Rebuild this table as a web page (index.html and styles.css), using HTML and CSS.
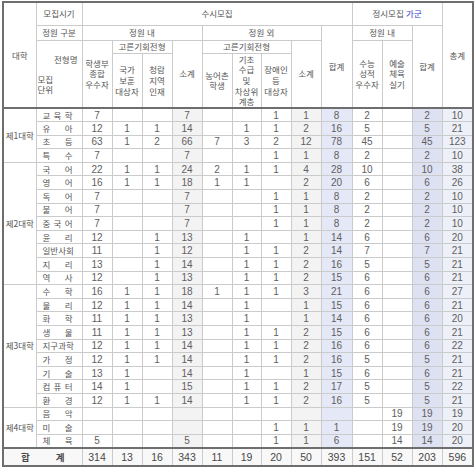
FILE: index.html
```html
<!DOCTYPE html>
<html lang="ko">
<head>
<meta charset="utf-8">
<link rel="stylesheet" href="styles.css">
</head>
<body>
<div class="frame">
<table class="t">
<colgroup>
<col class="w32"><col class="w46">
<col class="w30"><col class="w30"><col class="w30"><col class="w30">
<col class="w30"><col class="w29"><col class="w30"><col class="w30">
<col class="w31"><col class="w30"><col class="w30"><col class="w30"><col class="w30">
</colgroup>
<thead>
<tr class="h1">
<th rowspan="4">대학</th>
<th>모집시기</th>
<th colspan="9">수시모집</th>
<th colspan="3">정시모집 <span class="blue">가군</span></th>
<th rowspan="4">총계</th>
</tr>
<tr class="h2">
<th>정원 구분</th>
<th colspan="4">정원 내</th>
<th colspan="4">정원 외</th>
<th rowspan="3">합계</th>
<th colspan="2">정원 내</th>
<th rowspan="3">합계</th>
</tr>
<tr class="h3">
<th rowspan="2" class="diag"><div class="diagbox"><span class="dr">전형명</span><span class="dl">모집<br>단위</span></div></th>
<th rowspan="2">학생부<br>종합<br>우수자</th>
<th colspan="2">고른기회전형</th>
<th rowspan="2">소계</th>
<th colspan="3">고른기회전형</th>
<th rowspan="2">소계</th>
<th rowspan="2">수능<br>성적<br>우수자</th>
<th rowspan="2">예술<br>체육<br>실기</th>
</tr>
<tr class="h4">
<th>국가<br>보훈<br>대상자</th>
<th>청람<br>지역<br>인재</th>
<th>농어촌<br>학생</th>
<th>기초<br>수급<br>및<br>차상위<br>계층</th>
<th>장애인<br>등<br>대상자</th>
</tr>
</thead>
<tbody>
<tr><td rowspan="4" class="grp">제1대학</td><td class="lbl">교 육 학</td><td>7</td><td></td><td></td><td>7</td><td></td><td></td><td>1</td><td>1</td><td>8</td><td>2</td><td></td><td>2</td><td>10</td></tr>
<tr><td class="lbl">유 아</td><td>12</td><td>1</td><td>1</td><td>14</td><td></td><td>1</td><td>1</td><td>2</td><td>16</td><td>5</td><td></td><td>5</td><td>21</td></tr>
<tr><td class="lbl">초 등</td><td>63</td><td>1</td><td>2</td><td>66</td><td>7</td><td>3</td><td>2</td><td>12</td><td>78</td><td>45</td><td></td><td>45</td><td>123</td></tr>
<tr><td class="lbl">특 수</td><td>7</td><td></td><td></td><td>7</td><td></td><td></td><td>1</td><td>1</td><td>8</td><td>2</td><td></td><td>2</td><td>10</td></tr>

<tr><td rowspan="9" class="grp">제2대학</td><td class="lbl">국 어</td><td>22</td><td>1</td><td>1</td><td>24</td><td>2</td><td>1</td><td>1</td><td>4</td><td>28</td><td>10</td><td></td><td>10</td><td>38</td></tr>
<tr><td class="lbl">영 어</td><td>16</td><td>1</td><td>1</td><td>18</td><td>1</td><td>1</td><td></td><td>2</td><td>20</td><td>6</td><td></td><td>6</td><td>26</td></tr>
<tr><td class="lbl">독 어</td><td>7</td><td></td><td></td><td>7</td><td></td><td></td><td>1</td><td>1</td><td>8</td><td>2</td><td></td><td>2</td><td>10</td></tr>
<tr><td class="lbl">불 어</td><td>7</td><td></td><td></td><td>7</td><td></td><td></td><td>1</td><td>1</td><td>8</td><td>2</td><td></td><td>2</td><td>10</td></tr>
<tr><td class="lbl">중 국 어</td><td>7</td><td></td><td></td><td>7</td><td></td><td></td><td>1</td><td>1</td><td>8</td><td>2</td><td></td><td>2</td><td>10</td></tr>
<tr><td class="lbl">윤 리</td><td>12</td><td></td><td>1</td><td>13</td><td></td><td>1</td><td></td><td>1</td><td>14</td><td>6</td><td></td><td>6</td><td>20</td></tr>
<tr><td class="lbl">일반사회</td><td>11</td><td></td><td>1</td><td>12</td><td></td><td>1</td><td>1</td><td>2</td><td>14</td><td>7</td><td></td><td>7</td><td>21</td></tr>
<tr><td class="lbl">지 리</td><td>13</td><td></td><td>1</td><td>14</td><td></td><td>1</td><td>1</td><td>2</td><td>16</td><td>5</td><td></td><td>5</td><td>21</td></tr>
<tr><td class="lbl">역 사</td><td>12</td><td></td><td>1</td><td>13</td><td></td><td>1</td><td>1</td><td>2</td><td>15</td><td>6</td><td></td><td>6</td><td>21</td></tr>

<tr><td rowspan="9" class="grp">제3대학</td><td class="lbl">수 학</td><td>16</td><td>1</td><td>1</td><td>18</td><td>1</td><td>1</td><td>1</td><td>3</td><td>21</td><td>6</td><td></td><td>6</td><td>27</td></tr>
<tr><td class="lbl">물 리</td><td>12</td><td>1</td><td>1</td><td>14</td><td></td><td>1</td><td></td><td>1</td><td>15</td><td>6</td><td></td><td>6</td><td>21</td></tr>
<tr><td class="lbl">화 학</td><td>11</td><td>1</td><td>1</td><td>13</td><td></td><td>1</td><td></td><td>1</td><td>14</td><td>6</td><td></td><td>6</td><td>20</td></tr>
<tr><td class="lbl">생 물</td><td>11</td><td>1</td><td>1</td><td>13</td><td></td><td>1</td><td>1</td><td>2</td><td>15</td><td>6</td><td></td><td>6</td><td>21</td></tr>
<tr><td class="lbl">지구과학</td><td>12</td><td>1</td><td>1</td><td>14</td><td></td><td>1</td><td>1</td><td>2</td><td>16</td><td>6</td><td></td><td>6</td><td>22</td></tr>
<tr><td class="lbl">가 정</td><td>12</td><td>1</td><td>1</td><td>14</td><td></td><td>1</td><td>1</td><td>2</td><td>16</td><td>5</td><td></td><td>5</td><td>21</td></tr>
<tr><td class="lbl">기 술</td><td>13</td><td>1</td><td></td><td>14</td><td></td><td>1</td><td></td><td>1</td><td>15</td><td>6</td><td></td><td>6</td><td>21</td></tr>
<tr><td class="lbl">컴 퓨 터</td><td>14</td><td>1</td><td></td><td>15</td><td></td><td>1</td><td>1</td><td>2</td><td>17</td><td>5</td><td></td><td>5</td><td>22</td></tr>
<tr><td class="lbl">환 경</td><td>12</td><td>1</td><td>1</td><td>14</td><td></td><td>1</td><td>1</td><td>2</td><td>16</td><td>5</td><td></td><td>5</td><td>21</td></tr>

<tr><td rowspan="3" class="grp">제4대학</td><td class="lbl">음 악</td><td></td><td></td><td></td><td></td><td></td><td></td><td></td><td></td><td></td><td></td><td>19</td><td>19</td><td>19</td></tr>
<tr><td class="lbl">미 술</td><td></td><td></td><td></td><td></td><td></td><td></td><td>1</td><td>1</td><td>1</td><td></td><td>19</td><td>19</td><td>20</td></tr>
<tr><td class="lbl">체 육</td><td>5</td><td></td><td></td><td>5</td><td></td><td></td><td>1</td><td>1</td><td>6</td><td></td><td>14</td><td>14</td><td>20</td></tr>
</tbody>
<tfoot>
<tr><td colspan="2" class="totlbl">합<span class="gap"></span>계</td><td>314</td><td>13</td><td>16</td><td>343</td><td>11</td><td>19</td><td>20</td><td>50</td><td>393</td><td>151</td><td>52</td><td>203</td><td>596</td></tr>
</tfoot>
</table>
</div>
</body>
</html>
```

FILE: styles.css
```css
html, body {
  margin: 0;
  background: #ffffff;
}
body {
  padding: 1px 0 0 2px;
}
.frame {
  width: 468px;
  border: 2px solid #6e6e6e;
}
.t {
  width: 468px;
  table-layout: fixed;
  border-collapse: collapse;
  border-style: hidden;
  font-family: "Liberation Sans", "Noto Sans CJK KR", sans-serif;
  color: #606060;
}
.w29 { width: 29px; }
.w30 { width: 30px; }
.w31 { width: 31px; }
.w32 { width: 32px; }
.w46 { width: 46px; }

.t th, .t td {
  border: 1px solid #cbcbcb;
  padding: 0;
  text-align: center;
  vertical-align: middle;
  overflow: hidden;
  white-space: nowrap;
}
.t th {
  font-family: "Noto Sans CJK KR", sans-serif;
  font-size: 8.5px;
  font-weight: normal;
  line-height: 10.6px;
  color: #555555;
  background: #ffffff;
}
.t thead {
  border-bottom: 2px solid #6e6e6e;
}
.t tfoot {
  border-top: 2px solid #6e6e6e;
}
.h1 { height: 22px; }
.h2 { height: 15px; }
.h3 { height: 13px; }
.h4 { height: 55px; }
.blue { color: #3838d0; }

.diag {
  background: linear-gradient(to top right, transparent calc(50% - 0.6px), #8a8a8a 50%, transparent calc(50% + 0.6px));
}
.diagbox {
  height: 66px;
  box-sizing: border-box;
  padding: 13px 4px 12px 1px;
  display: flex;
  flex-direction: column;
  justify-content: space-between;
}
.dr { text-align: right; }
.dl { text-align: left; }

.t tbody tr {
  height: 13.6px;
}
.t tbody td {
  font-size: 10px;
  line-height: 9px;
}
.t tbody td.grp {
  font-family: "Noto Sans CJK KR", sans-serif;
  font-size: 8.5px;
  color: #555555;
}
.t tbody td.lbl {
  font-family: "Noto Sans CJK KR", sans-serif;
  font-size: 8.5px;
  color: #555555;
  text-align: justify;
  text-align-last: justify;
  padding: 0 9px 0 6px;
}
.t tbody td:nth-last-child(10),
.t tbody td:nth-last-child(6) {
  background: #f3f3f3;
}
.t tbody td:nth-last-child(5) {
  background: #e5e8f6;
}
.t tbody td:nth-last-child(2) {
  background: #dde1f2;
}
.t tbody td:nth-last-child(1) {
  background: #eef0f9;
}
.t tfoot tr {
  height: 17px;
}
.t tfoot td {
  font-size: 10.5px;
  line-height: 10px;
  background: #f8f8f8;
  color: #484848;
}
.t tfoot td.totlbl {
  font-family: "Noto Sans CJK KR", sans-serif;
  font-size: 9.5px;
  font-weight: bold;
}
.gap {
  display: inline-block;
  width: 26px;
}
```
